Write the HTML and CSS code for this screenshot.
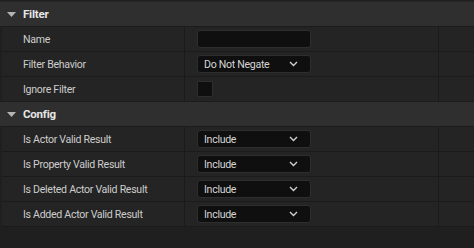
FILE: index.html
```html
<!DOCTYPE html>
<html>
<head>
<meta charset="utf-8">
<link rel="stylesheet" href="styles.css">
</head>
<body>
<div class="panel">
  <div class="header first">
    <svg class="tri" width="9" height="5" viewBox="0 0 9 5"><polygon points="0,0 9,0 4.5,5" fill="#b4b4b4"/></svg>
    <span>Filter</span>
  </div>
  <div class="row">
    <div class="label">Name</div>
    <div class="value"><div class="input"></div></div>
    <div class="extra"></div>
  </div>
  <div class="row">
    <div class="label">Filter Behavior</div>
    <div class="value"><div class="combo"><span>Do Not Negate</span><svg class="chev" width="9" height="6" viewBox="0 0 9 6"><polyline points="1,1 4.5,4.5 8,1" fill="none" stroke="#d0d0d0" stroke-width="1.4"/></svg></div></div>
    <div class="extra"></div>
  </div>
  <div class="row">
    <div class="label">Ignore Filter</div>
    <div class="value"><div class="check"></div></div>
    <div class="extra"></div>
  </div>
  <div class="header">
    <svg class="tri" width="9" height="5" viewBox="0 0 9 5"><polygon points="0,0 9,0 4.5,5" fill="#b4b4b4"/></svg>
    <span>Config</span>
  </div>
  <div class="row">
    <div class="label">Is Actor Valid Result</div>
    <div class="value"><div class="combo"><span>Include</span><svg class="chev" width="9" height="6" viewBox="0 0 9 6"><polyline points="1,1 4.5,4.5 8,1" fill="none" stroke="#d0d0d0" stroke-width="1.4"/></svg></div></div>
    <div class="extra"></div>
  </div>
  <div class="row">
    <div class="label">Is Property Valid Result</div>
    <div class="value"><div class="combo"><span>Include</span><svg class="chev" width="9" height="6" viewBox="0 0 9 6"><polyline points="1,1 4.5,4.5 8,1" fill="none" stroke="#d0d0d0" stroke-width="1.4"/></svg></div></div>
    <div class="extra"></div>
  </div>
  <div class="row">
    <div class="label">Is Deleted Actor Valid Result</div>
    <div class="value"><div class="combo"><span>Include</span><svg class="chev" width="9" height="6" viewBox="0 0 9 6"><polyline points="1,1 4.5,4.5 8,1" fill="none" stroke="#d0d0d0" stroke-width="1.4"/></svg></div></div>
    <div class="extra"></div>
  </div>
  <div class="row last">
    <div class="label">Is Added Actor Valid Result</div>
    <div class="value"><div class="combo"><span>Include</span><svg class="chev" width="9" height="6" viewBox="0 0 9 6"><polyline points="1,1 4.5,4.5 8,1" fill="none" stroke="#d0d0d0" stroke-width="1.4"/></svg></div></div>
    <div class="extra"></div>
  </div>
</div>
</body>
</html>
```

FILE: styles.css
```css
html, body {
  margin: 0;
  padding: 0;
  background: #1f1f1f;
  width: 474px;
  height: 248px;
  overflow: hidden;
}
.panel {
  padding-top: 1px;
  font-family: Roboto, "Noto Sans", sans-serif;
  font-size: 10.6px;
  letter-spacing: -0.3px;
  color: #cdcdcd;
}
.header {
  display: flex;
  align-items: center;
  height: 24px;
  background: #2f2f2f;
  border-top: 1px solid #1c1c1c;
  padding-left: 7px;
  gap: 7px;
  font-weight: bold;
  color: #e6e6e6;
  font-size: 11.5px;
  letter-spacing: -0.2px;
}
.header.first {
  border-top-color: #272727;
}
.tri {
  display: block;
}
.row {
  display: grid;
  grid-template-columns: 182px 254px 1fr;
  height: 24px;
  background: #242424;
  border-top: 1px solid #1b1b1b;
  margin-left: 2px;
}
.row.last {
  border-bottom: 1px solid #1b1b1b;
}
.label {
  display: flex;
  align-items: center;
  padding-left: 21px;
}
.value {
  display: flex;
  align-items: center;
  border-left: 1px solid #1b1b1b;
  padding-left: 12px;
}
.extra {
  border-left: 1px solid #1b1b1b;
}
.input {
  width: 112px;
  height: 16px;
  background: #0f0f0f;
  border: 1px solid #2e2e2e;
  border-radius: 3px;
}
.combo {
  box-sizing: border-box;
  width: 114px;
  height: 18px;
  background: #0f0f0f;
  border: 1px solid #2e2e2e;
  border-radius: 3px;
  display: flex;
  align-items: center;
  justify-content: space-between;
  padding: 0 12px 0 6px;
  color: #d6d6d6;
}
.chev {
  display: block;
}
.check {
  width: 14px;
  height: 14px;
  background: #0f0f0f;
  border: 1px solid #2e2e2e;
  border-radius: 1px;
}
```
